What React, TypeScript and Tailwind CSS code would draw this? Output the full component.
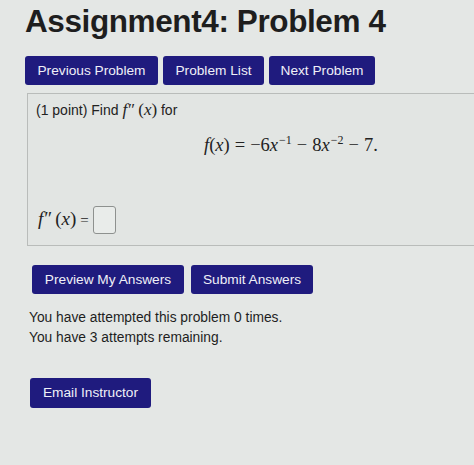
import React from "react";

const btn =
  "bg-[#1f1b7e] text-[#f0f0f8] rounded-[3px] h-[29px] text-[13.7px] leading-none flex items-center justify-center whitespace-nowrap";

const serif = { fontFamily: '"Liberation Serif", "Times New Roman", serif' };

export default function App() {
  return (
    <div
      className="w-[474px] h-[465px] bg-[#e4e7e5] text-[#222] overflow-hidden relative"
      style={{ fontFamily: '"Liberation Sans", Arial, sans-serif' }}
    >
      <div className="pl-[25px] pt-[2px]">
        <h1 className="text-[31.5px] font-bold leading-[38px] tracking-[-0.4px] text-[#1e1e1e] whitespace-nowrap">
          Assignment4: Problem 4
        </h1>
        <div className="flex gap-[5px] mt-[16px]">
          <button className={btn + " w-[133px]"}>Previous Problem</button>
          <button className={btn + " w-[101px]"}>Problem List</button>
          <button className={btn + " w-[106px]"}>Next Problem</button>
        </div>
      </div>
      <div className="ml-[27px] mt-[8px] h-[153px] border border-r-0 border-[#b9bcba] bg-[#e2e5e3] pl-[8px] pt-[3px]">
        <div className="text-[14px] flex items-baseline whitespace-nowrap">
          <span>(1 point) Find&nbsp;</span>
          <span className="text-[17px]" style={serif}>
            <i>f</i>
            <span className="ml-[1px] mr-[3px]">″</span>(<i>x</i>)
          </span>
          <span>&nbsp;for</span>
        </div>
        <div className="text-[18.5px] mt-[9px] pl-[168px] whitespace-nowrap" style={serif}>
          <i>f</i>(<i>x</i>)<span className="mx-[5px]">=</span>−6<i>x</i>
          <sup className="text-[12px] relative -top-[7px] ml-[1px]">−1</sup>
          <span className="mx-[5px]">−</span>8<i>x</i>
          <sup className="text-[12px] relative -top-[7px] ml-[1px]">−2</sup>
          <span className="mx-[5px]">−</span>7.
        </div>
        <div className="flex items-center mt-[46px]">
          <span className="text-[19px] ml-[2px] whitespace-nowrap" style={serif}>
            <i>f</i>
            <span className="ml-[1px] mr-[3px]">″</span>(<i>x</i>)
            <span className="text-[15px] ml-[4px]">=</span>
          </span>
          <span className="ml-[4px] w-[23px] h-[28px] border border-[#8e918f] rounded-[3px] bg-[#e9ecea]" />
        </div>
      </div>
      <div className="pl-[32px] mt-[19px] flex gap-[7px]">
        <button className={btn + " w-[152px]"}>Preview My Answers</button>
        <button className={btn + " w-[122px]"}>Submit Answers</button>
      </div>
      <div className="pl-[29px] mt-[14px] text-[13.8px] leading-[20px] text-[#1e1e1e]">
        <div>You have attempted this problem 0 times.</div>
        <div>You have 3 attempts remaining.</div>
      </div>
      <div className="pl-[30px] mt-[30px]">
        <button className={btn + " w-[121px] h-[30px]"}>Email Instructor</button>
      </div>
    </div>
  );
}
